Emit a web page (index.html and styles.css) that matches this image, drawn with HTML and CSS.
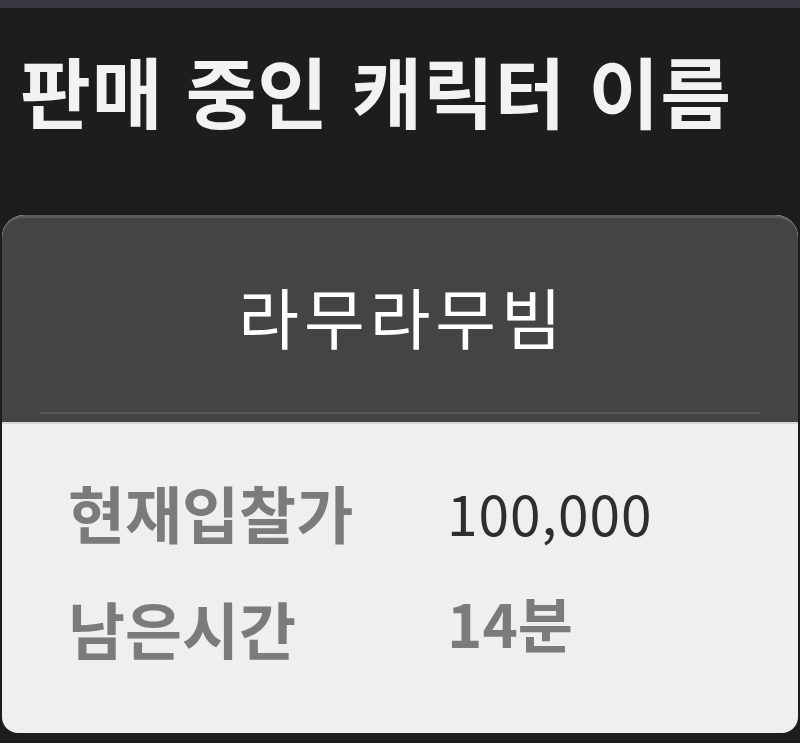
FILE: index.html
```html
<!DOCTYPE html>
<html lang="ko">
<head>
<meta charset="utf-8">
<link rel="stylesheet" href="styles.css">
</head>
<body>
<div class="topbar"></div>
<h1 class="title">판매 중인 캐릭터 이름</h1>
<div class="card">
  <div class="card-head">
    <div class="name">라무라무빔</div>
    <div class="divider"></div>
  </div>
  <div class="card-body">
    <div class="row">
      <span class="label">현재입찰가</span>
      <span class="value">100,000</span>
    </div>
    <div class="row">
      <span class="label low">남은시간</span>
      <span class="value bold">14분</span>
    </div>
  </div>
</div>
</body>
</html>
```
FILE: styles.css
```css
html, body {
  margin: 0;
  padding: 0;
}
body {
  width: 800px;
  height: 743px;
  background: #1d1d1d;
  font-family: "Noto Sans CJK KR", "Noto Sans", sans-serif;
  overflow: hidden;
}
.topbar {
  height: 8px;
  background: #3a3640;
}
.title {
  margin: 0;
  padding: 43px 0 0 20px;
  height: 163px;
  box-sizing: border-box;
  color: #f2f2f2;
  font-size: 77px;
  font-weight: 700;
  line-height: 1;
  letter-spacing: 0.8px;
  white-space: nowrap;
}
.card {
  margin: 44px 2px 0 2px;
  height: 518px;
  display: flex;
  flex-direction: column;
  border-radius: 22px 22px 16px 16px;
  overflow: hidden;
  background: #efefef;
}
.card-head {
  height: 207px;
  background: #444444;
  border-top: 3px solid #5b5b5b;
  box-sizing: border-box;
  border-radius: 22px 22px 0 0;
  display: flex;
  flex-direction: column;
  align-items: center;
}
.name {
  margin-top: 64px;
  color: #ffffff;
  font-size: 66px;
  font-weight: 400;
  line-height: 1;
  letter-spacing: 5px;
  padding-left: 5px;
}
.divider {
  margin-top: auto;
  margin-bottom: 8px;
  width: 720px;
  height: 2px;
  background: #575757;
}
.card-body {
  flex: 1;
  border-top: 2px solid #d8d8d8;
  padding: 53px 0 0 66px;
  display: flex;
  flex-direction: column;
  gap: 40px;
}
.row {
  display: flex;
  align-items: center;
  height: 70px;
}
.label {
  width: 379px;
  color: #7b7b7b;
  font-size: 62px;
  font-weight: 700;
  line-height: 1;
  letter-spacing: 0;
}
.label.low {
  margin-top: 12px;
}
.value {
  color: #2e2e2e;
  font-size: 55px;
  font-weight: 400;
  line-height: 1;
  letter-spacing: 1px;
}
.value.bold {
  color: #7b7b7b;
  font-weight: 700;
  font-size: 60px;
  letter-spacing: 0;
}
```
